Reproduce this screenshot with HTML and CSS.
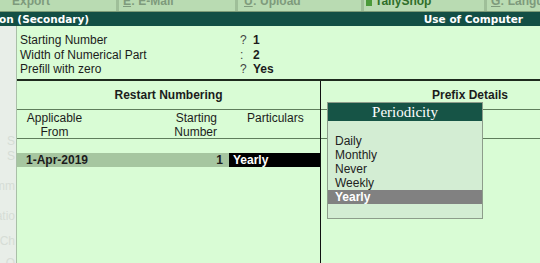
FILE: index.html
```html
<!DOCTYPE html>
<html lang="en">
<head>
    <meta charset="UTF-8" />
    <title>Numbering (Secondary)</title>
    <link rel="stylesheet" href="styles.css">
</head>
<body>
    <div class="toolbar">
        <div class="tool t1">Export</div>
        <div class="tool t2"><u>E</u>: E-Mail</div>
        <div class="tool t3"><u>U</u>: Upload</div>
        <div class="tool t4 active"><span class="shop-ico"></span>TallyShop</div>
        <div class="tool t5"><u>G</u>: Language</div>
    </div>

    <div class="titlebar">
        <span class="title-left">on (Secondary)</span>
        <span class="title-right">Use of Computer</span>
    </div>

    <div class="main">
        <div class="side">
            <span class="ghost g1">S</span>
            <span class="ghost g2">S</span>
            <span class="ghost g3">mm</span>
            <span class="ghost g4">atio</span>
            <span class="ghost g5">Ch</span>
            <span class="ghost g6">O</span>
        </div>

        <div class="panel">
            <div class="settings">
                <div class="set-row"><span class="set-label">Starting Number</span><span class="set-q">?</span><b>1</b></div>
                <div class="set-row"><span class="set-label">Width of Numerical Part</span><span class="set-q">:</span><b>2</b></div>
                <div class="set-row"><span class="set-label">Prefill with zero</span><span class="set-q">?</span><b>Yes</b></div>
            </div>

            <div class="columns">
                <div class="col-left">
                    <div class="sec-title">Restart Numbering</div>
                    <div class="col-heads">
                        <div class="h-from">Applicable<br>From</div>
                        <div class="h-start">Starting<br>Number</div>
                        <div class="h-part">Particulars</div>
                    </div>
                    <div class="entry">
                        <div class="entry-main">
                            <span class="e-date">1-Apr-2019</span>
                            <span class="e-num">1</span>
                        </div>
                        <div class="e-part">Yearly</div>
                    </div>
                </div>

                <div class="col-right">
                    <div class="sec-title">Prefix Details</div>
                    <div class="col-heads"></div>

                    <div class="popup">
                        <div class="popup-head">Periodicity</div>
                        <ul class="popup-list">
                            <li>Daily</li>
                            <li>Monthly</li>
                            <li>Never</li>
                            <li>Weekly</li>
                            <li class="sel">Yearly</li>
                        </ul>
                    </div>
                </div>
            </div>
        </div>
    </div>
</body>
</html>
```

FILE: styles.css
```css
html, body {
    height: 100%;
}
body {
    margin: 0;
    overflow: hidden;
    font-family: "Liberation Sans", Arial, sans-serif;
    font-size: 12px;
    color: #1c1c1c;
    background: #d9fcd5;
    display: flex;
    flex-direction: column;
}

/* top button strip, mostly scrolled out of view */
.toolbar {
    height: 11px;
    display: flex;
    gap: 3px;
    background: #9fbf99;
    border-bottom: 1px solid #7e9c78;
    overflow: hidden;
}
.tool {
    background: #b9dbb2;
    color: #7e9a7c;
    font-weight: bold;
    font-size: 12px;
    line-height: 14px;
    margin-top: -6px;
    padding-left: 4px;
    white-space: nowrap;
    overflow: hidden;
}
.tool u {
    text-decoration: underline;
}
.t1 { width: 104px; padding-left: 12px; }
.t2 { width: 112px; }
.t3 { width: 117px; padding-left: 6px; }
.t4 { width: 118px; padding-left: 2px; }
.t5 { flex: 1; }
.tool.active {
    color: #2f6f2a;
}
.shop-ico {
    display: inline-block;
    width: 6px;
    height: 10px;
    margin-right: 3px;
    background: #4a9a3a;
    vertical-align: -1px;
}

.titlebar {
    height: 14px;
    display: flex;
    justify-content: space-between;
    align-items: center;
    background: #134f45;
    color: #fff;
    font-family: "DejaVu Sans", Verdana, sans-serif;
    font-weight: bold;
    font-size: 10.5px;
    padding-right: 17px;
}
.title-left {
    margin-left: -1px;
}

.main {
    flex: 1;
    display: flex;
}
.side {
    width: 16px;
    background: #e8eee8;
    border-right: 1px solid #a9bfa7;
    position: relative;
    overflow: hidden;
}
.ghost {
    position: absolute;
    right: 1px;
    color: #d6ddd6;
    font-size: 12px;
    white-space: nowrap;
}
.g1 { top: 108px; }
.g2 { top: 123px; }
.g3 { top: 153px; }
.g4 { top: 183px; }
.g5 { top: 208px; }
.g6 { top: 230px; }

.panel {
    flex: 1;
    display: flex;
    flex-direction: column;
}

.settings {
    padding: 7px 0 2px 3px;
    border-bottom: 2px solid #1e2a1e;
}
.set-row {
    display: flex;
    line-height: 14.5px;
}
.set-label {
    width: 220px;
}
.set-q {
    width: 13px;
    color: #444;
}

.columns {
    flex: 1;
    display: flex;
}
.col-left {
    width: 303px;
    border-right: 1px solid #111;
}
.col-right {
    flex: 1;
    position: relative;
}
.sec-title {
    height: 28px;
    line-height: 28px;
    font-weight: bold;
    text-align: center;
    border-bottom: 1px solid #5f7d5c;
}
.col-right .sec-title {
    text-align: right;
    padding-right: 32px;
}
.col-heads {
    height: 29px;
    display: grid;
    grid-template-columns: 75px 1fr 91px;
    padding-top: 1px;
    line-height: 14px;
    border-bottom: 1px solid #5f7d5c;
    box-sizing: border-box;
}
.h-from {
    text-align: center;
}
.h-start {
    text-align: right;
    padding-right: 12px;
}
.h-part {
    padding-left: 18px;
}

.entry {
    margin-top: 14px;
    display: flex;
    height: 14px;
    line-height: 14px;
    font-weight: bold;
}
.entry-main {
    width: 212px;
    display: flex;
    justify-content: space-between;
    padding: 0 6px 0 9px;
    box-sizing: border-box;
    background: #a6c6a0;
}
.e-part {
    flex: 1;
    background: #000;
    color: #fff;
    padding-left: 4px;
}

.popup {
    position: absolute;
    left: 6px;
    top: 21px;
    width: 154px;
    background: #d3edd3;
    border: 1px solid #8d9d8b;
}
.popup-head {
    height: 18px;
    line-height: 18px;
    background: #165446;
    color: #fff;
    text-align: center;
    font-family: "Liberation Serif", "Times New Roman", serif;
    font-size: 15px;
}
.popup-list {
    list-style: none;
    margin: 0;
    padding: 13px 0 14px;
    line-height: 14px;
}
.popup-list li {
    padding-left: 7px;
    color: #222;
}
.popup-list li.sel {
    background: #818181;
    color: #fff;
    font-weight: bold;
}
```
